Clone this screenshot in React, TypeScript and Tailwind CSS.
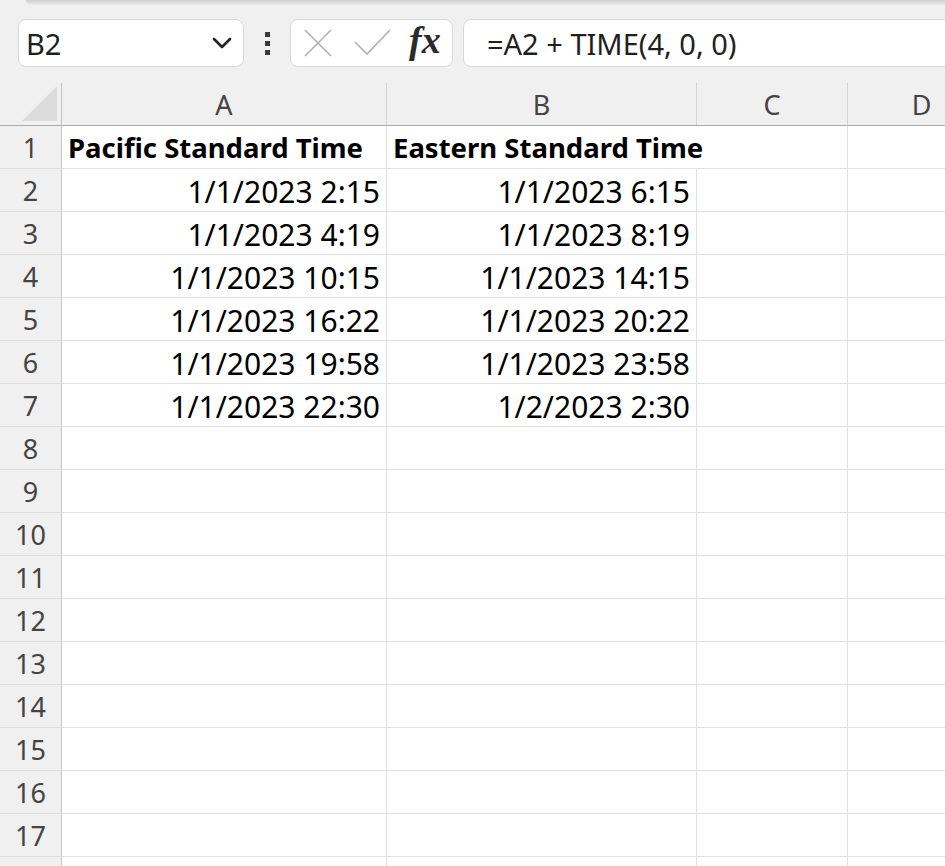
import React from 'react';

const rows: [string, string][] = [
  ['1/1/2023 2:15', '1/1/2023 6:15'],
  ['1/1/2023 4:19', '1/1/2023 8:19'],
  ['1/1/2023 10:15', '1/1/2023 14:15'],
  ['1/1/2023 16:22', '1/1/2023 20:22'],
  ['1/1/2023 19:58', '1/1/2023 23:58'],
  ['1/1/2023 22:30', '1/2/2023 2:30'],
];

const font = { fontFamily: '"Noto Sans", "Open Sans", sans-serif' };

const Toolbar: React.FC = () => (
  <div className="flex items-center h-[48px] mt-[14px]">
    <div className="ml-[18px] w-[226px] shrink-0 h-full bg-white border border-[#d9d9d9] rounded-[8px] flex items-center justify-between pl-[7px] pr-[11px]">
      <span className="text-[29px] text-[#1f1f1f] leading-none">B2</span>
      <svg width="20" height="14" viewBox="0 0 20 14">
        <path d="M2 3 L10 11 L18 3" fill="none" stroke="#222" strokeWidth="2.6" strokeLinecap="round" strokeLinejoin="round" />
      </svg>
    </div>
    <div className="w-[46px] shrink-0 h-full flex flex-col items-center justify-center gap-[4px]">
      <span className="w-[5px] h-[5px] bg-[#3a3a3a]" />
      <span className="w-[5px] h-[5px] bg-[#3a3a3a]" />
      <span className="w-[5px] h-[5px] bg-[#3a3a3a]" />
    </div>
    <div className="w-[163px] shrink-0 h-full bg-white border border-[#d9d9d9] rounded-[8px] flex items-center pl-[12px]">
      <svg width="30" height="28" viewBox="0 0 30 28">
        <path d="M2 1 L28 27 M28 1 L2 27" stroke="#b3b3b3" strokeWidth="1.7" fill="none" />
      </svg>
      <svg width="38" height="28" viewBox="0 0 38 28" className="ml-[21px]">
        <path d="M1 13 L13 25 L36 1" stroke="#b3b3b3" strokeWidth="1.7" fill="none" />
      </svg>
      <span
        className="ml-[17px] text-[38px] italic font-semibold text-[#2b2b2b] leading-none -mt-[6px]"
        style={{ fontFamily: '"Liberation Serif", "DejaVu Serif", serif' }}
      >
        fx
      </span>
    </div>
    <div className="ml-[10px] w-[520px] shrink-0 h-full bg-white border border-[#d9d9d9] rounded-l-[8px] flex items-center pl-[23px]">
      <span className="text-[29px] text-[#1f1f1f] leading-none whitespace-nowrap">=A2 + TIME(4, 0, 0)</span>
    </div>
  </div>
);

const HeaderRow: React.FC = () => (
  <div className="flex h-[43px] mt-[16px] border-b border-[#ababab]">
    <div className="w-[62px] shrink-0 border-r border-[#c6c6c6] flex items-end justify-end pr-[3px] pb-[4px]">
      <svg width="36" height="35" viewBox="0 0 36 35">
        <path d="M35 0 L35 35 L0 35 Z" fill="#dcdcdc" />
      </svg>
    </div>
    {[
      ['A', 'w-[325px]'],
      ['B', 'w-[310px]'],
      ['C', 'w-[151px]'],
    ].map(([l, w]) => (
      <div key={l} className={`${w} shrink-0 border-r border-[#d4d4d4] flex items-center justify-center text-[27px] text-[#444] pt-[2px]`}>
        {l}
      </div>
    ))}
    <div className="flex-1 flex items-center justify-center text-[27px] text-[#444] pt-[2px] pl-[50px]">D</div>
  </div>
);

const Cell: React.FC<{ w: string; children?: React.ReactNode; right?: boolean; bold?: boolean }> = ({ w, children, right, bold }) => (
  <div
    className={`${w} shrink-0 h-full border-r border-[#e1e1e1] flex items-center pt-[2px] whitespace-nowrap text-black ${
      right ? 'justify-end pr-[6px] text-[30px]' : 'pl-[6px] text-[27.5px]'
    } ${bold ? 'font-bold' : ''}`}
  >
    {children}
  </div>
);

export default function App() {
  const all = Array.from({ length: 18 }, (_, i) => i + 1);
  return (
    <div className="w-[945px] h-[866px] bg-[#f0f0f0] overflow-hidden" style={font}>
      <div className="ml-[26px] h-[5px] rounded-bl-[6px] bg-linear-to-b from-[#cfcfcf] to-[#ececec]" />
      <Toolbar />
      <HeaderRow />
      <div className="flex flex-col">
        {all.map((n) => {
          const data = n >= 2 && n <= 7 ? rows[n - 2] : null;
          return (
            <div key={n} className="flex h-[43px] shrink-0">
              <div className="w-[62px] shrink-0 border-r border-[#c6c6c6] border-b border-b-[#dedede] flex items-center justify-center text-[27px] text-[#444] pt-[2px]">
                {n < 18 ? n : ''}
              </div>
              <div className="flex flex-1 bg-white border-b border-[#e1e1e1]">
                {n === 1 ? (
                  <>
                    <Cell w="w-[325px]" bold>Pacific Standard Time</Cell>
                    <div className="w-[310px] shrink-0 h-full flex items-center pt-[2px] pl-[6px] whitespace-nowrap text-[27.5px] font-bold text-black">
                      Eastern Standard Time
                    </div>
                  </>
                ) : (
                  <>
                    <Cell w="w-[325px]" right>{data ? data[0] : ''}</Cell>
                    <Cell w="w-[310px]" right>{data ? data[1] : ''}</Cell>
                  </>
                )}
                <div className="w-[151px] shrink-0 h-full border-r border-[#e1e1e1]" />
                <div className="flex-1" />
              </div>
            </div>
          );
        })}
      </div>
    </div>
  );
}
